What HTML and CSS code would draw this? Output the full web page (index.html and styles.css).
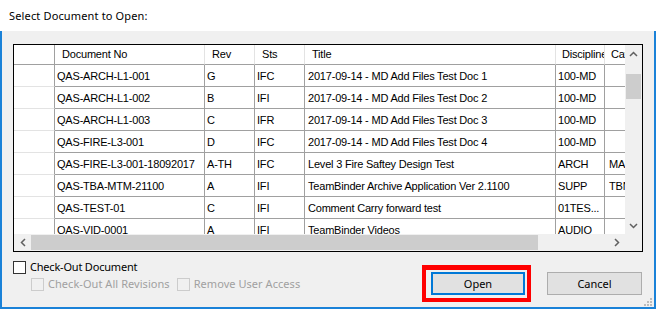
FILE: index.html
```html
<!DOCTYPE html>
<html>
<head>
<meta charset="utf-8">
<link rel="stylesheet" href="styles.css">
</head>
<body>
<div class="window">
  <div class="titlebar">Select Document to Open:</div>
  <div class="body">
    <div class="grid">
      <div class="viewport">
        <div class="row head">
          <div class="c rh"></div>
          <div class="c docno">Document No</div>
          <div class="c rev">Rev</div>
          <div class="c sts">Sts</div>
          <div class="c title">Title</div>
          <div class="c disc">Discipline</div>
          <div class="c cat">Category</div>
        </div>
        <div class="row">
          <div class="c rh"></div><div class="c docno">QAS-ARCH-L1-001</div><div class="c rev">G</div><div class="c sts">IFC</div><div class="c title">2017-09-14 - MD Add Files Test Doc 1</div><div class="c disc">100-MD</div><div class="c cat"></div>
        </div>
        <div class="row">
          <div class="c rh"></div><div class="c docno">QAS-ARCH-L1-002</div><div class="c rev">B</div><div class="c sts">IFI</div><div class="c title">2017-09-14 - MD Add Files Test Doc 2</div><div class="c disc">100-MD</div><div class="c cat"></div>
        </div>
        <div class="row">
          <div class="c rh"></div><div class="c docno">QAS-ARCH-L1-003</div><div class="c rev">C</div><div class="c sts">IFR</div><div class="c title">2017-09-14 - MD Add Files Test Doc 3</div><div class="c disc">100-MD</div><div class="c cat"></div>
        </div>
        <div class="row">
          <div class="c rh"></div><div class="c docno">QAS-FIRE-L3-001</div><div class="c rev">D</div><div class="c sts">IFC</div><div class="c title">2017-09-14 - MD Add Files Test Doc 4</div><div class="c disc">100-MD</div><div class="c cat"></div>
        </div>
        <div class="row">
          <div class="c rh"></div><div class="c docno">QAS-FIRE-L3-001-18092017</div><div class="c rev">A-TH</div><div class="c sts">IFC</div><div class="c title">Level 3 Fire Saftey Design Test</div><div class="c disc">ARCH</div><div class="c cat">MAIN</div>
        </div>
        <div class="row">
          <div class="c rh"></div><div class="c docno">QAS-TBA-MTM-21100</div><div class="c rev">A</div><div class="c sts">IFI</div><div class="c title">TeamBinder Archive Application Ver 2.1100</div><div class="c disc">SUPP</div><div class="c cat">TBN</div>
        </div>
        <div class="row">
          <div class="c rh"></div><div class="c docno">QAS-TEST-01</div><div class="c rev">C</div><div class="c sts">IFI</div><div class="c title">Comment Carry forward test</div><div class="c disc">01TES...</div><div class="c cat"></div>
        </div>
        <div class="row">
          <div class="c rh"></div><div class="c docno">QAS-VID-0001</div><div class="c rev">A</div><div class="c sts">IFI</div><div class="c title">TeamBinder Videos</div><div class="c disc">AUDIO</div><div class="c cat"></div>
        </div>
      </div>
      <div class="vscroll">
        <div class="arrow"><svg width="9" height="6" viewBox="0 0 9 6"><polyline points="1,5 4.5,1.5 8,5" fill="none" stroke="#606060" stroke-width="1.5"/></svg></div>
        <div class="vtrack"><div class="vthumb"></div></div>
        <div class="arrow"><svg width="9" height="6" viewBox="0 0 9 6"><polyline points="1,1 4.5,4.5 8,1" fill="none" stroke="#606060" stroke-width="1.5"/></svg></div>
      </div>
      <div class="hscroll">
        <div class="arrow"><svg width="6" height="9" viewBox="0 0 6 9"><polyline points="5,1 1.5,4.5 5,8" fill="none" stroke="#606060" stroke-width="1.5"/></svg></div>
        <div class="htrack"><div class="hthumb"></div></div>
        <div class="arrow"><svg width="6" height="9" viewBox="0 0 6 9"><polyline points="1,1 4.5,4.5 1,8" fill="none" stroke="#606060" stroke-width="1.5"/></svg></div>
      </div>
      <div class="corner"></div>
    </div>
    <div class="bottom">
      <div class="checks">
        <label class="chk"><span class="box"></span>Check-Out Document</label>
        <div class="subchecks">
          <label class="chk disabled"><span class="box"></span>Check-Out All Revisions</label>
          <label class="chk disabled"><span class="box"></span>Remove User Access</label>
        </div>
      </div>
      <div class="buttons">
        <button class="btn open">Open</button>
        <button class="btn cancel">Cancel</button>
      </div>
    </div>
    <svg class="grip" width="9" height="9" viewBox="0 0 9 9">
      <rect x="6" y="0" width="2" height="2" fill="#bcbcbc"/>
      <rect x="3" y="3" width="2" height="2" fill="#bcbcbc"/>
      <rect x="6" y="3" width="2" height="2" fill="#bcbcbc"/>
      <rect x="0" y="6" width="2" height="2" fill="#bcbcbc"/>
      <rect x="3" y="6" width="2" height="2" fill="#bcbcbc"/>
      <rect x="6" y="6" width="2" height="2" fill="#bcbcbc"/>
    </svg>
  </div>
</div>
</body>
</html>
```

FILE: styles.css
```css
* { box-sizing: border-box; }
html, body { margin: 0; padding: 0; }
body {
  width: 657px;
  height: 309px;
  overflow: hidden;
  background: #ffffff;
  font-family: "Noto Sans", "Liberation Sans", sans-serif;
}
.window {
  width: 657px;
  height: 309px;
  display: flex;
  flex-direction: column;
}
.titlebar {
  height: 31px;
  flex: none;
  background: #ffffff;
  padding: 1px 0 0 9px;
  font-size: 11px;
  letter-spacing: 0.15px;
  line-height: 30px;
  color: #000000;
}
.body {
  position: relative;
  flex: 1;
  background: #f0f0f0;
  border-left: 2px solid #1a82d8;
  border-right: 2px solid #1a82d8;
  border-bottom: 2px solid #1a82d8;
  margin-right: 1px;
  display: flex;
  flex-direction: column;
}
.grid {
  margin: 13px 0 0 11px;
  width: 630px;
  height: 208px;
  border: 1px solid #000000;
  display: grid;
  grid-template-columns: 611px 17px;
  grid-template-rows: 189px 17px;
  background: #f0f0f0;
}
.viewport {
  overflow: hidden;
  background: #ffffff;
  font-family: "Liberation Sans", Arial, sans-serif;
  font-size: 11px;
  letter-spacing: -0.2px;
  color: #000000;
}
.row {
  display: flex;
  width: 700px;
  height: 22px;
}
.row.head { height: 20px; }
.c {
  flex: none;
  height: 100%;
  overflow: hidden;
  white-space: nowrap;
  border-right: 1px solid #a0a0a0;
  border-bottom: 1px solid #a0a0a0;
  padding: 2px 0 0 2px;
  line-height: 19px;
}
.head .c {
  padding: 0 0 0 7px;
  line-height: 19px;
  border-right-color: #e3e3e3;
}
.c.rh {
  width: 41px;
  border-bottom-color: #e3e3e3;
  border-right-color: #a0a0a0;
}
.head .c.rh { border-right-color: #a0a0a0; border-bottom-color: #a0a0a0; }
.c.docno { width: 150px; }
.c.rev { width: 50px; }
.c.sts { width: 50px; }
.c.title { width: 251px; padding-left: 3px; }
.head .c.title { padding-left: 7px; }
.c.disc { width: 49px; }
.head .c.disc { padding-left: 6px; }
.c.cat { width: 80px; padding-left: 4px; }
.head .c.cat { padding-left: 6px; }

.vscroll {
  display: flex;
  flex-direction: column;
  background: #f0f0f0;
}
.arrow {
  flex: none;
  width: 17px;
  height: 17px;
  display: flex;
  align-items: center;
  justify-content: center;
}
.vtrack { flex: 1; padding: 12px 1px 0 1px; }
.vthumb { height: 25px; background: #cdcdcd; }
.hscroll {
  display: flex;
  background: #f0f0f0;
}
.htrack { flex: 1; padding: 1px 0; }
.hthumb { width: 507px; height: 15px; background: #cdcdcd; }
.corner { background: #f0f0f0; }

.bottom {
  display: flex;
  margin: 0 12px 0 11px;
}
.checks {
  margin-top: 9px;
  display: flex;
  flex-direction: column;
  gap: 4px;
}
.subchecks {
  display: flex;
  margin-left: 18px;
  gap: 7px;
}
.chk {
  display: flex;
  align-items: center;
  height: 13px;
  font-size: 11px;
  line-height: 13px;
  color: #000000;
  white-space: nowrap;
  padding-bottom: 2px;
}
.chk.main { letter-spacing: -0.2px; }
.checks > .chk { letter-spacing: -0.2px; }
.chk .box {
  width: 13px;
  height: 13px;
  border: 1px solid #333333;
  background: #ffffff;
  margin-right: 4px;
  margin-top: 2px;
  flex: none;
}
.chk.disabled { color: #a0a0a0; letter-spacing: 0.05px; }
.chk.disabled .box {
  border-color: #cccccc;
  background: #f0f0f0;
}
.buttons {
  margin-left: auto;
  margin-top: 20px;
  display: flex;
  gap: 22px;
}
.btn {
  height: 23px;
  padding: 0;
  font-family: "Noto Sans", "Liberation Sans", sans-serif;
  font-size: 11px;
  color: #000000;
  background: #e1e1e1;
  border: 1px solid #adadad;
  line-height: 20px;
}
.btn.open {
  position: relative;
  width: 94px;
  border: 2px solid #0078d7;
}
.btn.open::after {
  content: "";
  position: absolute;
  left: -11px;
  top: -9px;
  right: -8px;
  bottom: -9px;
  border: 4px solid #ff0000;
  border-top-width: 5px;
}
.btn.cancel { width: 95px; }
.grip {
  position: absolute;
  right: 1px;
  bottom: 0px;
}
```
